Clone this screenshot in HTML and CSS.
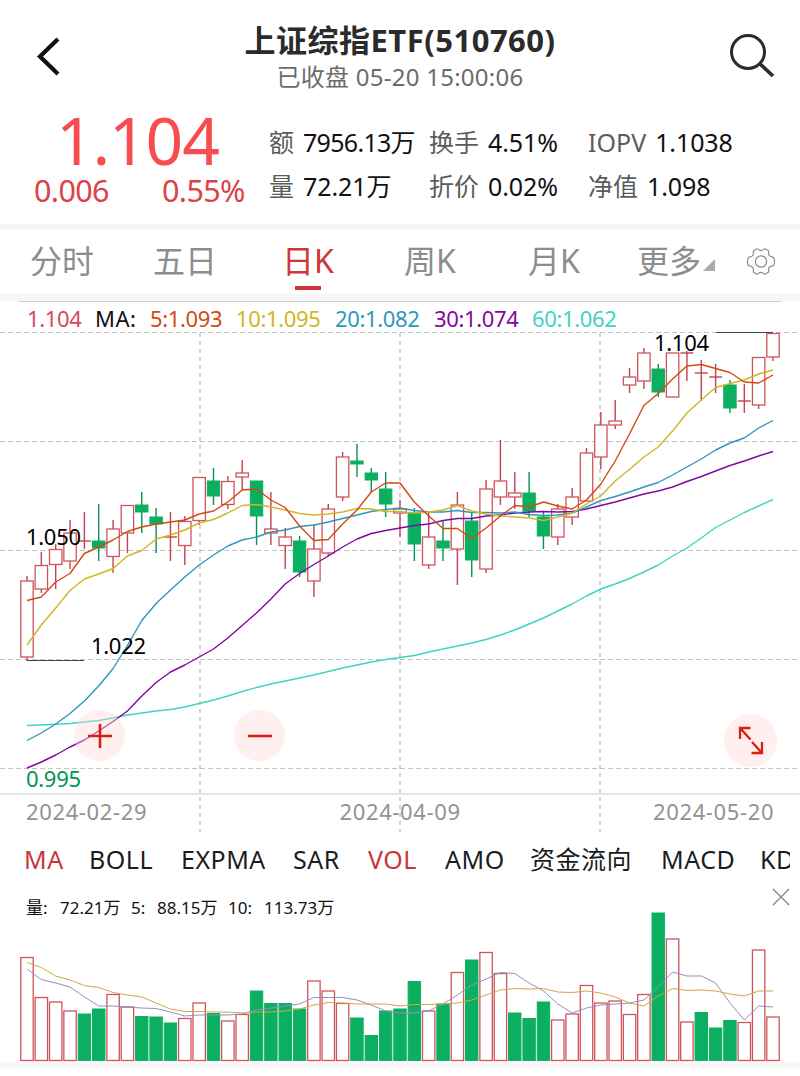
FILE: index.html
```html
<!DOCTYPE html>
<html lang="zh-CN">
<head>
    <meta charset="UTF-8">
    <meta name="viewport" content="width=device-width, initial-scale=1.0">
    <title>上证综指ETF(510760)</title>
    <link rel="stylesheet" href="styles.css">
</head>
<body>

    <header class="header">
        <svg class="back" viewBox="0 0 24 40" fill="none" stroke="#111" stroke-width="4.2"><path d="M22 3 L4 20.500 L22 38" /></svg>
        <div class="heading">
            <h1>上证综指ETF(510760)</h1>
            <p>已收盘 05-20 15:00:06</p>
        </div>
        <svg class="search" viewBox="0 0 46 46" fill="none" stroke="#2b2b2b" stroke-width="3"><circle cx="19" cy="19" r="16.5" /><path d="M30 30 L44 43" stroke-width="3.6" /></svg>
    </header>

    <section class="quote">
        <div class="price">
            <div class="last">1.104</div>
            <div class="change"><span>0.006</span><span>0.55%</span></div>
        </div>
        <dl class="stats">
            <div><dt>额</dt><dd>7956.13万</dd></div>
            <div><dt>换手</dt><dd>4.51%</dd></div>
            <div><dt>IOPV</dt><dd>1.1038</dd></div>
            <div><dt>量</dt><dd>72.21万</dd></div>
            <div><dt>折价</dt><dd>0.02%</dd></div>
            <div><dt>净值</dt><dd>1.098</dd></div>
        </dl>
    </section>

    <nav class="tabs">
        <a>分时</a>
        <a>五日</a>
        <a class="active">日K</a>
        <a>周K</a>
        <a>月K</a>
        <a class="more">更多</a>
        <svg class="gear" viewBox="0 0 30 30" fill="none" stroke="#8c8c8c" stroke-width="1.2"><path d="M11 1.8 C12 1.2 12.6 3.6 15 3.6 C17.4 3.6 18 1.2 19 1.8 L22.4 3.7 C23.4 4.5 21.8 6.1 23 8.2 C24.1 10.1 26.8 9.5 27.8 10.8 C28.8 12.500 28.8 16.5 27.8 18.2 C26.8 19.500 24.1 18.9 23 20.8 C21.800 22.9 23.400 24.5 22.4 25.3 L19 27.200 C18 27.8 17.400 25.4 15 25.400 C12.600 25.4 12 27.8 11 27.2 L7.600 25.3 C6.600 24.5 8.200 22.9 7 20.8 C5.900 18.9 3.200 19.5 2.200 18.2 C1.200 16.5 1.200 12.5 2.200 10.8 C3.200 9.5 5.900 10.1 7 8.2 C8.200 6.1 6.600 4.5 7.600 3.7 Z" /><circle cx="15" cy="14.5" r="5.6" /></svg>
    </nav>

    <main class="chart">
        <div class="legend">
            <span class="now">1.104</span>
            <span class="label">MA:</span>
            <span class="ma5">5:1.093</span>
            <span class="ma10">10:1.095</span>
            <span class="ma20">20:1.082</span>
            <span class="ma30">30:1.074</span>
            <span class="ma60">60:1.062</span>
        </div>
        <svg id="kline" class="kline" viewBox="0 332 800 502"></svg>
        <button class="round plus"><svg viewBox="0 0 24 24"><path d="M0 12 H24 M12 0 V24" /></svg></button>
        <button class="round minus"><svg viewBox="0 0 24 24"><path d="M0 12 H24" /></svg></button>
        <button class="round expand"><svg viewBox="0 0 28 30"><path d="M3 13 V2 H13.5 M3 2 L13.5 13.5 M25 16 V27 H14.5 M25 27 L15 16" /></svg></button>
    </main>

    <nav class="indicators">
        <a class="active">MA</a>
        <a>BOLL</a>
        <a>EXPMA</a>
        <a>SAR</a>
        <a class="active">VOL</a>
        <a>AMO</a>
        <a>资金流向</a>
        <a>MACD</a>
        <a>KDJ</a>
    </nav>

    <section class="volume">
        <div class="volume-head">
            <span>量:</span><span>72.21万</span><span>5:</span><span>88.15万</span><span>10:</span><span>113.73万</span>
            <svg class="close" viewBox="0 0 18 18" stroke="#888" stroke-width="1.4"><path d="M1 1 L17 17 M17 1 L1 17" /></svg>
        </div>
        <svg id="vol" class="vol" viewBox="0 900 800 162"></svg>
    </section>

    <script src="chart.js"></script>
</body>
</html>
```
FILE: styles.css
```css
/* Global reset */
* {
    margin: 0;
    padding: 0;
    box-sizing: border-box;
}

body {
    width: 800px;
    height: 1076px;
    overflow: hidden;
    background-color: #fff;
    font-family: "Noto Sans", "Noto Sans CJK SC", sans-serif;
    color: #111;
}

svg {
    display: block;
}

/* Header */
.header {
    display: flex;
    justify-content: space-between;
    height: 94px;
    padding: 20px 25px 0 36px;
}

.back {
    width: 24px;
    height: 40px;
    margin-top: 16px;
}

.heading {
    text-align: center;
    padding-left: 11px;
}

.heading h1 {
    font-size: 31px;
    line-height: 40px;
    font-weight: 700;
    color: #2b2b2b;
    letter-spacing: 0.5px;
}

.heading p {
    font-size: 24px;
    line-height: 34px;
    color: #6c6c6c;
    letter-spacing: 0.25px;
}

.search {
    width: 46px;
    height: 46px;
    margin-top: 13px;
}

/* Quote */
.quote {
    display: flex;
    height: 136px;
    padding-top: 16px;
    border-bottom: 6px solid #f6f6f6;
}

.price {
    width: 269px;
    padding-left: 34px;
    color: #f84c4f;
}

.last {
    font-size: 66px;
    line-height: 59px;
    padding-left: 22px;
    letter-spacing: -1.2px;
}

.change {
    display: flex;
    font-size: 30.5px;
    line-height: 42px;
    color: #db4247;
    letter-spacing: -0.6px;
}

.change span:first-child {
    flex: none;
    width: 128px;
}

.stats {
    display: grid;
    grid-template-columns: 160px 159px 200px;
    grid-auto-rows: 44px;
    padding-top: 10px;
    font-size: 25px;
    line-height: 44px;
    white-space: nowrap;
}

.stats div {
    display: flex;
    gap: 9px;
}

.stats dt {
    color: #5c5c5c;
}

.stats dd {
    letter-spacing: -0.1px;
}

.stats div:first-child dd {
    letter-spacing: -0.7px;
}

/* Period tabs */
.tabs {
    display: grid;
    grid-template-columns: 123px 129px 122px 124px 109px 109px 30px;
    height: 71px;
    padding-left: 30px;
    border-bottom: 7px solid #f6f6f6;
    font-size: 32px;
    line-height: 61px;
    color: #8d8d8d;
}

.tabs .active {
    position: relative;
    color: #cf3539;
}

.tabs .active::after {
    content: "";
    position: absolute;
    left: 13px;
    top: 56px;
    width: 26px;
    height: 4px;
    background-color: #cf3539;
}

.more {
    display: flex;
    align-items: center;
    gap: 2px;
    height: 61px;
}

.more::after {
    content: "";
    margin-top: 9px;
    border-left: 12px solid transparent;
    border-bottom: 12px solid #aaa;
}

.gear {
    width: 30px;
    height: 30px;
    margin-top: 17px;
}

/* Candlestick chart */
.chart {
    position: relative;
}

.legend {
    display: grid;
    grid-template-columns: 68px 55px 86px 99px 99px 98px 100px;
    height: 31px;
    margin: 0 19px;
    padding-left: 8px;
    border-top: 1px solid #cfcfcf;
    font-size: 22px;
    line-height: 32px;
    letter-spacing: -0.35px;
}

.label { letter-spacing: 0.5px; }
.now { color: #d9485a; }
.ma5 { color: #d24a14; }
.ma10 { color: #d4b423; }
.ma20 { color: #2e97bd; }
.ma30 { color: #8209a0; }
.ma60 { color: #3fd4c0; }

.kline {
    width: 800px;
    height: 502px;
    overflow: visible;
}

.grid {
    stroke: #c4c4c4;
    stroke-dasharray: 5 3;
}

.grid-v {
    stroke: #c4c4c4;
    stroke-width: 1.5;
    stroke-dasharray: 4 4;
}

.axis {
    stroke: #dcdcdc;
    stroke-width: 1.5;
}

.mark {
    stroke: #444;
    stroke-width: 1.2;
}

.up {
    fill: #fff;
    stroke: #d0545c;
    stroke-width: 1.3;
}

.down {
    fill: #0ab060;
    stroke: #0ab060;
    stroke-width: 1;
}

.wick-up { stroke: #c0444f; stroke-width: 1.4; }
.wick-down { stroke: #079052; stroke-width: 1.4; }

.line {
    fill: none;
    stroke: currentColor;
    stroke-width: 1.4;
    stroke-linejoin: round;
}

.chart-text {
    font-size: 22px;
    fill: #000;
}

.chart-text.low { fill: #009454; }
.chart-text.date { fill: #929292; }

.round {
    position: absolute;
    top: 409px;
    width: 51px;
    height: 51px;
    border: 0;
    border-radius: 50%;
    background-color: rgba(255, 215, 215, 0.4);
}

.round svg {
    width: 24px;
    height: 24px;
    margin: 0 auto;
    fill: none;
    stroke: #df1c10;
    stroke-width: 2.6;
}

.plus { left: 74px; }
.minus { left: 234px; }

.expand {
    left: 724px;
    top: 413px;
    width: 53px;
    height: 53px;
}

.expand svg {
    width: 28px;
    height: 30px;
    stroke-width: 2.3;
}

/* Indicator tabs */
.indicators {
    display: grid;
    grid-template-columns: 65px 92px 112px 75px 77px 85px 131px 99px auto;
    width: 790px;
    height: 50px;
    padding-left: 24px;
    overflow: hidden;
    font-size: 25px;
    line-height: 50px;
    letter-spacing: 0.5px;
    white-space: nowrap;
    color: #1c1c1c;
}

.indicators .active {
    color: #c9353a;
}

/* Volume */
.volume {
    border-bottom: 6px solid #f9f7f7;
}

.volume-head {
    display: grid;
    grid-template-columns: 34px 71px 26px 71px 36px 508px 18px;
    height: 16px;
    padding-left: 26px;
    font-size: 17px;
    line-height: 47px;
}

.close {
    width: 18px;
    height: 18px;
    margin-top: 4px;
}

.vol {
    width: 800px;
    height: 162px;
}

.vol5 { color: #8f8fc4; stroke-width: 1; }
.vol10 { color: #d3a548; stroke-width: 1; }
```
FILE: chart.js
```js
const FIRST_X = 27;
const STEP = 746 / 52;
const BASE_Y = 1060.5;

// [high, top, bottom, low, down?] in chart units
const candles = [
    [576, 581, 657, 661], [552, 565.5, 589, 593], [544, 549.5, 564.5, 589], [520, 533, 561, 569],
    [512, 541, 541, 549], [504, 541, 548, 561, 1], [520, 529, 556.5, 573], [505, 505.5, 533, 553],
    [492, 505, 512, 533, 1], [508, 517, 524, 553, 1], [512, 537, 537, 561], [516, 521.5, 545.5, 565],
    [477, 477.5, 520.5, 525], [468, 481, 496, 505, 1], [476, 481.5, 504.5, 509], [460, 473, 477, 490],
    [481, 481, 516, 545, 1], [492, 529, 533, 545], [528, 537, 545.5, 569], [536, 541, 572, 577, 1],
    [524, 549, 581, 597], [504, 509, 553, 556], [452, 457, 497, 501], [444, 461, 464, 477, 1],
    [468, 473, 480, 492, 1], [472, 489, 504, 517, 1], [500, 509, 513, 537], [508, 513, 544, 561, 1],
    [512, 537, 565, 569], [521, 541, 548, 561, 1], [492, 505, 549, 585], [512, 521, 560, 577, 1],
    [480, 489, 569, 573], [440, 481, 497, 505], [472, 493, 497, 509], [472, 493, 511, 517, 1],
    [512, 517, 536, 549, 1], [504, 509, 537, 545], [488, 497, 517, 525], [448, 453, 501, 501],
    [412, 425, 457, 469], [400, 421, 425, 429], [368, 377, 385, 393], [348, 353, 381, 389],
    [364, 369, 392, 397, 1], [353, 353, 397, 397], [351, 353, 353, 381], [360, 373, 373, 401],
    [364, 377, 377, 393], [380, 385, 408, 413, 1], [384, 401, 401, 413], [357, 357.5, 405, 409],
    [333, 333.5, 357, 361]
];

const volumes = [
    957.5, 997.5, 1002, 1011, 1014, 1009, 994.5, 1007, 1016.5, 1017, 1023, 1018.5, 1003, 1013.5,
    1021, 1014.5, 991, 1003.5, 1003.5, 1009, 981, 991, 1003.5, 1018, 1035.5, 1011, 1009, 981.5,
    1011, 1004, 972.5, 960, 952.5, 973.5, 1013, 1018.5, 1002, 1020, 1014, 985.5, 1003, 1001,
    1014.5, 994.5, 913, 939, 1022, 1012.5, 1028, 1020.5, 1022.5, 950, 1017
];

const downVolumes = [4, 5, 8, 9, 10, 13, 16, 17, 18, 19, 23, 24, 25, 26, 27, 29, 31, 34, 35, 36, 44, 47, 48, 49];

const averages = {
    ma60: [725.5, 725, 724.3, 723.5, 722, 720.5, 718, 715, 713, 711, 709.5, 707, 703.5, 700, 696, 691.5, 687.5, 684, 681, 678, 675, 671.5, 668, 665, 662, 659.5, 657.5, 655.5, 652, 649, 646, 643, 639.5, 635, 630, 624, 618, 611, 604, 596, 589, 584, 578.5, 572, 565, 556, 548, 538, 527.5, 520, 512.5, 506, 499.5],
    ma30: [768, 762, 755, 747, 740, 731, 721.5, 711, 696, 682.5, 672, 665, 657, 649, 638, 625.5, 613, 599, 584, 573.5, 564.5, 556, 547, 539, 533.5, 530.5, 528, 525.5, 524, 520.5, 518.5, 518.5, 516, 515, 513, 512, 511.5, 512, 511.5, 509, 505.5, 502, 498, 494, 491, 487, 481.5, 476.5, 471, 465.5, 461, 456, 451.5],
    ma20: [740.5, 733, 724, 713.5, 701, 686, 668.5, 645.5, 620.5, 603.5, 590, 577, 565, 555, 546, 540, 537, 532, 530, 526.5, 525, 522, 518.5, 515, 511.5, 509.5, 508, 510.5, 512, 512, 510.5, 512.5, 512.5, 513, 512, 514.5, 515.5, 515, 513, 507, 500.5, 496.5, 492, 487, 482.5, 475, 467, 459, 450, 443, 438, 428, 420.5],
    ma10: [645, 625, 608, 590.5, 579, 574, 568.5, 556, 550.5, 539, 535, 530, 523, 519.5, 513, 505.5, 504.5, 507, 510, 513.5, 515, 514, 512, 508.5, 509, 511.5, 511.5, 513, 512, 510, 505.5, 511, 514, 516, 517, 518, 520.5, 517, 513, 504, 496, 481, 469.5, 457, 447, 431, 413, 400, 387.5, 383.5, 380, 374, 370],
    ma5: [600.5, 597, 582, 573.5, 553.5, 547, 540, 531.5, 527, 524, 522, 520, 514, 511, 502, 490, 489, 500, 507.5, 526, 540.5, 539.5, 524, 510, 492, 483, 483, 502, 516, 528.5, 528.5, 538.5, 528, 516, 505.5, 507, 502, 506, 509, 500, 484, 461, 434, 405.5, 393.5, 379, 366, 364.5, 368.5, 372.5, 382, 383, 375]
};

const volumeAverages = {
    vol5: [969, 979.5, 983, 987, 997, 1006, 1006, 1007, 1008, 1008.5, 1012, 1016, 1015, 1015, 1015, 1014, 1010, 1008, 1006, 1004, 997.5, 997.5, 997.5, 1000, 1005, 1011, 1013, 1013, 1011, 1004, 995, 985, 979, 972.5, 973.5, 983, 991, 1004, 1013, 1008, 1005, 1004, 1003, 1000, 987, 972, 976, 976, 983, 1003, 1020, 1006, 1007],
    vol10: [962.5, 967.5, 976, 980, 985.5, 987.5, 992.5, 995, 997, 1003, 1009, 1011.5, 1011.5, 1012, 1012, 1013, 1012, 1012, 1011, 1009, 1005, 1002.5, 1003, 1004, 1004, 1004, 1006, 1004.5, 1004.5, 1004, 1003, 1000, 995, 990, 988.5, 989, 988.5, 992, 992.5, 991, 993, 997, 1003, 1006, 996, 988.5, 990.5, 990, 991, 994, 996, 991, 991]
};

const xAt = i => FIRST_X + i * STEP;

function line(x1, y1, x2, y2, cls) {
    return `<line x1="${x1}" y1="${y1}" x2="${x2}" y2="${y2}" class="${cls}"/>`;
}

function rect(x, top, bottom, cls) {
    return `<rect x="${x - 6.2}" y="${top}" width="12.4" height="${bottom - top}" class="${cls}"/>`;
}

function curve(values, cls) {
    const points = values.map((y, i) => `${xAt(i).toFixed(1)},${y}`).join(" ");
    return `<polyline points="${points}" class="line ${cls}"/>`;
}

function text(x, y, width, value, cls = "") {
    return `<text x="${x}" y="${y}" textLength="${width}" class="chart-text ${cls}">${value}</text>`;
}

function drawKline() {
    let out = "";
    [332.5, 441.5, 550.5, 659.5, 768.5].forEach(y => out += line(0, y, 800, y, "grid"));
    [200, 400, 600].forEach(x => out += line(x, 333, x, 832, "grid-v"));
    out += line(0, 794, 800, 794, "axis");

    candles.forEach(([high, top, bottom, low, down], i) => {
        const x = xAt(i);
        const wick = down ? "wick-down" : "wick-up";
        if (top === bottom) {
            out += line(x, high, x, low, wick) + line(x - 6.5, top, x + 6.5, top, wick);
            return;
        }
        out += line(x, high, x, top, wick) + line(x, bottom, x, low, wick);
        out += rect(x, top, bottom, down ? "down" : "up");
    });

    Object.keys(averages).forEach(key => out += curve(averages[key], key));

    // highest and lowest price markers
    out += line(716, 332.5, 773, 332.5, "mark") + line(27, 660.5, 84, 660.5, "mark");
    out += text(654, 351, 55, "1.104") + text(26, 545, 55, "1.050");
    out += text(91, 654, 55, "1.022") + text(26, 787, 55, "0.995", "low");
    out += text(26, 819.5, 120.5, "2024-02-29", "date");
    out += text(339.5, 819.5, 120.5, "2024-04-09", "date");
    out += text(653, 819.5, 120.5, "2024-05-20", "date");
    document.getElementById("kline").innerHTML = out;
}

function drawVolume() {
    let out = "";
    volumes.forEach((top, i) => {
        out += rect(xAt(i), top, BASE_Y, downVolumes.includes(i) ? "down" : "up");
    });
    Object.keys(volumeAverages).forEach(key => out += curve(volumeAverages[key], key));
    document.getElementById("vol").innerHTML = out;
}

drawKline();
drawVolume();
```
